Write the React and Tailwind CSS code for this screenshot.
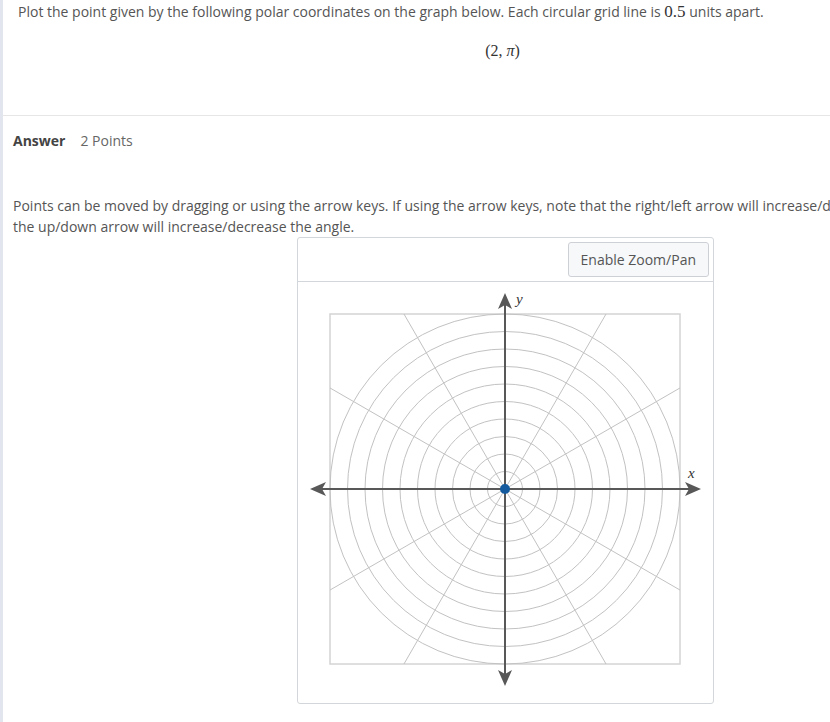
import React from "react";

const C = 207; // graph center inside the svg
const STEP = 17.5;

function PolarGraph() {
  const circles = [];
  for (let k = 1; k <= 10; k++) circles.push(k * STEP);
  const angles = [30, 60, 120, 150, 210, 240, 300, 330];
  const half = 175;

  return (
    <svg width="415" height="421" viewBox="0 0 415 421" className="block">
      <rect x={C - half} y={C - half} width={half * 2} height={half * 2} fill="none" stroke="#d4d4d4" strokeWidth="1.5" />
      {circles.map(r => (
        <circle key={r} cx={C} cy={C} r={r} fill="none" stroke="#c2c2c2" strokeWidth="1" />
      ))}
      {angles.map(a => {
        const rad = (a * Math.PI) / 180;
        const cx = Math.cos(rad);
        const sy = Math.sin(rad);
        // extend to square edge
        const t = half / Math.max(Math.abs(cx), Math.abs(sy));
        return (
          <line key={a} x1={C} y1={C} x2={C + cx * t} y2={C - sy * t} stroke="#c2c2c2" strokeWidth="1" />
        );
      })}
      {/* axes */}
      <line x1="20" y1={C} x2="394" y2={C} stroke="#585858" strokeWidth="2" />
      <line x1={C} y1="20" x2={C} y2="394" stroke="#585858" strokeWidth="2" />
      {/* arrow heads */}
      <path d={`M403 ${C} L387 ${C - 7} L391 ${C} L387 ${C + 7} Z`} fill="#585858" />
      <path d={`M12 ${C} L28 ${C - 7} L24 ${C} L28 ${C + 7} Z`} fill="#585858" />
      <path d={`M${C} 11 L${C - 7} 27 L${C} 23 L${C + 7} 27 Z`} fill="#585858" />
      <path d={`M${C} 404 L${C - 7} 388 L${C} 392 L${C + 7} 388 Z`} fill="#585858" />
      <text x="218" y="22" fontFamily="'Liberation Serif', serif" fontStyle="italic" fontSize="15" fill="#333">y</text>
      <text x="390" y="196" fontFamily="'Liberation Serif', serif" fontStyle="italic" fontSize="15" fill="#333">x</text>
      <circle cx={C} cy={C} r="5" fill="#135b9e" />
    </svg>
  );
}

export default function App() {
  return (
    <div className="w-[830px] h-[722px] overflow-hidden bg-white">
      <div className="w-[1000px] border-l-[3px] border-[#e3e5ee] min-h-[722px] font-['Open_Sans',sans-serif] text-[14px] text-[#555]">
        <div className="h-[116px] px-[15px] pt-[2px] border-b border-[#e6e6e6]">
          <p className="leading-[20px]">
            Plot the point given by the following polar coordinates on the graph below. Each circular grid line is{" "}
            <span className="font-['Liberation_Serif',serif] text-[17px] text-[#333]">0.5</span> units apart.
          </p>
          <div className="mt-[17px] text-center font-['Liberation_Serif',serif] text-[16px] text-[#333] pl-[2px]">
            (2, <i>π</i>)
          </div>
        </div>
        <div className="px-[10px]">
          <div className="flex items-center gap-[15px] h-[48px]">
            <span className="font-bold text-[#444]">Answer</span>
            <span className="text-[#666]">2 Points</span>
          </div>
          <p className="mt-[31px] leading-[21px] whitespace-nowrap">
            Points can be moved by dragging or using the arrow keys. If using the arrow keys, note that the right/left arrow will increase/decrease the distance from the origin, and
            <br />
            the up/down arrow will increase/decrease the angle.
          </p>
          <div className="ml-[284px] w-[417px] h-[467px] border border-[#d3d6da] rounded-[3px]">
            <div className="h-[44px] border-b border-[#d3d6da] flex justify-end items-start pt-[4px] pr-[4px]">
              <button className="h-[35px] px-[12px] bg-[#f6f8fa] border border-[#cdd1d6] rounded-[3px] text-[14px] text-[#555]">
                Enable Zoom/Pan
              </button>
            </div>
            <PolarGraph />
          </div>
        </div>
      </div>
    </div>
  );
}
